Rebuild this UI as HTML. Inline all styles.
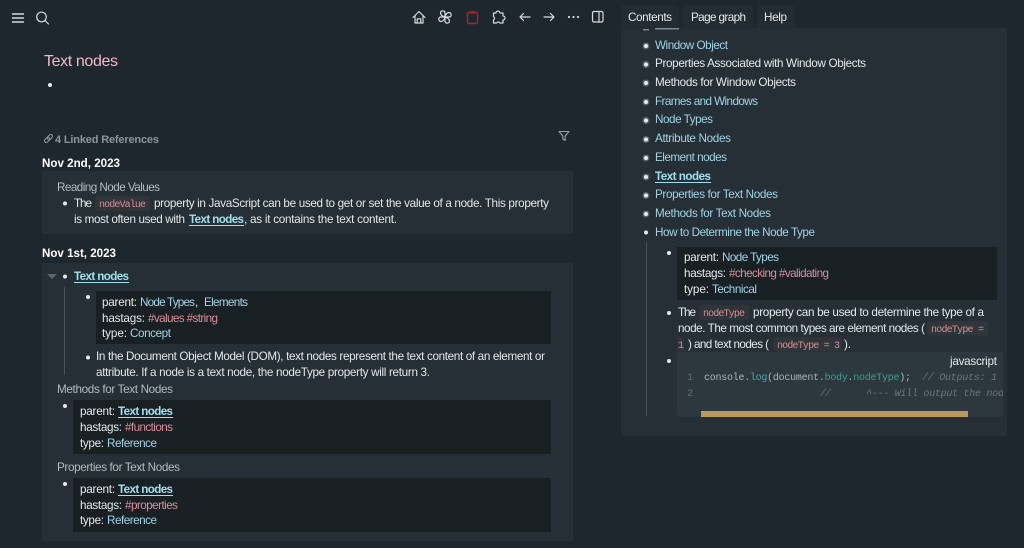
<!DOCTYPE html>
<html><head><meta charset="utf-8"><title>Text nodes</title>
<style>
html,body{margin:0;padding:0;background:#1f272e;width:1024px;height:548px;overflow:hidden}
svg{display:block}
text{font-family:"Liberation Sans",sans-serif;font-size:11.7px;fill:#e4e8ea}
.l{fill:#9dd3e6}
.b{font-weight:bold;fill:#9fe0f0;font-size:11.6px}
.t{fill:#d98c9a}
.g{fill:#b3bbc0}
.h{font-weight:bold;fill:#fff;font-size:11.6px}
.m{font-family:"Liberation Mono",monospace;font-size:10px}
.p{fill:#d98c9a}
.i{fill:none;stroke:#d5dadd;stroke-width:1.2;stroke-linecap:round;stroke-linejoin:round}
</style></head><body>
<svg width="1024" height="548" viewBox="0 0 1024 548" xmlns="http://www.w3.org/2000/svg">
<rect width="1024" height="548" fill="#1f272e"/>

<!-- toolbar icons -->
<path class="i" d="M12.5 14h11M12.5 18h11M12.5 22h11" style="stroke-width:1.4"/>
<circle class="i" cx="41.5" cy="17" r="4.8"/><path class="i" d="M45 20.5l3.5 3.5"/>
<path class="i" d="M413 17.500l6-6 6 6M415 15.500v7.500h8v-7.500M417.200 23v-4.200h3.600v4.200"/>
<path class="i" d="M445 17c-3.500-1-4.500-2.500-4.500-4a2.300 2.300 0 0 1 4.500-.5zM445 17c1-3.500 2.500-4.500 4-4.500a2.300 2.300 0 0 1 .5 4.500zM445 17c3.500 1 4.500 2.500 4.500 4a2.300 2.300 0 0 1-4.500.5zM445 17c-1 3.500-2.500 4.500-4 4.500a2.300 2.300 0 0 1-.5-4.500z"/>
<rect x="467.500" y="12.500" width="10" height="11" rx="1.500" fill="none" stroke="#a82424" stroke-width="1.500"/><rect x="470" y="11" width="5" height="2.500" rx=".8" fill="#a82424"/>
<path class="i" d="M494 14h2.500a2 2 0 0 1 4 0h3v3a2 2 0 0 1 0 4v3h-3a2 2 0 0 0-3.500 0h-3v-3a2 2 0 0 0 0-3.500z" transform="translate(-.5 -1)"/>
<path class="i" d="M520 17h10M520 17l3.500-3.500M520 17l3.500 3.500"/>
<path class="i" d="M544 17h10M554 17l-3.500-3.500M554 17l-3.500 3.500"/>
<circle cx="569" cy="17" r="1.100" fill="#d5dadd"/><circle cx="573.500" cy="17" r="1.100" fill="#d5dadd"/><circle cx="578" cy="17" r="1.100" fill="#d5dadd"/>
<rect class="i" x="592.500" y="11.500" width="10.500" height="10.500" rx="1.500"/><path class="i" d="M599 11.500v10.500"/>

<!-- left heading -->
<text x="44" y="66" style="font-size:16px;fill:#f4b8c6" textLength="74">Text nodes</text>
<circle cx="50" cy="85" r="2" fill="#e6eaec"/>
<g transform="rotate(-45 48.500 138.500)" fill="none" stroke="#8a949c" stroke-width="1.100">
<rect x="43.500" y="136.700" width="6" height="3.600" rx="1.800"/>
<rect x="47.500" y="136.700" width="6" height="3.600" rx="1.800"/>
</g>
<text x="55" y="143" style="font-weight:bold;fill:#8a949c;font-size:11px" textLength="104">4 Linked References</text>
<path d="M559 131.500h10l-3.800 4.500v4.500l-2.400-1.500v-3z" fill="none" stroke="#98a1a8" stroke-width="1.100" stroke-linejoin="round"/>

<!-- card 1 -->
<text x="42" y="167" class="h" textLength="78">Nov 2nd, 2023</text>
<rect x="42" y="171" width="531" height="63" rx="2" fill="#252f35"/>
<text x="57" y="191" class="g" textLength="103">Reading Node Values</text>
<circle cx="65" cy="203.500" r="2" fill="#e6eaec"/>
<text x="74" y="207" textLength="18">The</text>
<rect x="95" y="196" width="55" height="15" rx="3" fill="#2f3539"/>
<text x="99" y="207" class="m p" textLength="47">nodeValue</text>
<text x="154" y="207" textLength="395">property in JavaScript can be used to get or set the value of a node. This property</text>
<text x="74" y="223" textLength="111">is most often used with</text>
<text x="189" y="223" class="b" textLength="55">Text nodes</text>
<rect x="189" y="225" width="55" height="1" fill="#9fe0f0"/>
<text x="244" y="223" textLength="153">, as it contains the text content.</text>

<!-- card 2 -->
<text x="42" y="257" class="h" textLength="74">Nov 1st, 2023</text>
<rect x="42" y="263" width="531" height="278" rx="2" fill="#252f35"/>
<path d="M47 274h10l-5 5z" fill="#5a666d"/>
<circle cx="65" cy="276.500" r="2" fill="#e6eaec"/>
<text x="74" y="280" class="b" textLength="55">Text nodes</text>
<rect x="74" y="282" width="55" height="1" fill="#9fe0f0"/>
<rect x="64" y="287" width="1" height="88" fill="#46525a"/>

<rect x="96" y="291" width="455" height="53" fill="#192024"/>
<circle cx="88" cy="297" r="2" fill="#e6eaec"/>
<text x="102" y="306" textLength="35">parent:</text>
<text x="140" y="306" class="l" textLength="55">Node Types</text>
<text x="195" y="306">,</text>
<text x="204" y="306" class="l" textLength="44">Elements</text>
<text x="102" y="322" textLength="43">hastags:</text>
<text x="148" y="322" class="t" textLength="70">#values #string</text>
<text x="102" y="337" textLength="25">type:</text>
<text x="130" y="337" class="l" textLength="41">Concept</text>

<circle cx="88" cy="357.500" r="2" fill="#e6eaec"/>
<text x="96" y="360" textLength="449">In the Document Object Model (DOM), text nodes represent the text content of an element or</text>
<text x="96" y="376" textLength="334">attribute. If a node is a text node, the nodeType property will return 3.</text>

<text x="57" y="393" class="g" textLength="116">Methods for Text Nodes</text>
<rect x="73" y="400" width="478" height="54" fill="#192024"/>
<circle cx="65" cy="406" r="2" fill="#e6eaec"/>
<text x="80" y="415" textLength="35">parent:</text>
<text x="118" y="415" class="b" textLength="55">Text nodes</text>
<rect x="118" y="417" width="55" height="1" fill="#9fe0f0"/>
<text x="80" y="431" textLength="42">hastags:</text>
<text x="125" y="431" class="t" textLength="48">#functions</text>
<text x="80" y="447" textLength="24">type:</text>
<text x="107" y="447" class="l" textLength="50">Reference</text>

<text x="57" y="471" class="g" textLength="123">Properties for Text Nodes</text>
<rect x="73" y="478" width="478" height="54" fill="#192024"/>
<circle cx="65" cy="484" r="2" fill="#e6eaec"/>
<text x="80" y="493" textLength="35">parent:</text>
<text x="118" y="493" class="b" textLength="55">Text nodes</text>
<rect x="118" y="495" width="55" height="1" fill="#9fe0f0"/>
<text x="80" y="509" textLength="42">hastags:</text>
<text x="125" y="509" class="t" textLength="53">#properties</text>
<text x="80" y="524" textLength="24">type:</text>
<text x="107" y="524" class="l" textLength="50">Reference</text>

<!-- right panel -->
<rect x="621" y="28" width="386" height="408" rx="3" fill="#252f35"/>
<rect x="621" y="5" width="58" height="25" rx="4" fill="#232c33"/>
<rect x="683" y="5" width="70" height="25" rx="4" fill="#232c33"/>
<rect x="757" y="5" width="38" height="25" rx="4" fill="#232c33"/>
<text x="628" y="21" textLength="44">Contents</text>
<text x="691" y="21" textLength="55">Page graph</text>
<text x="764" y="21" textLength="23">Help</text>
<rect x="643" y="29" width="6" height="1.500" fill="#7d878d"/>
<rect x="655" y="28" width="24" height="1.500" fill="#7d878d"/>

<g fill="#5a666d">
<circle cx="646" cy="46" r="3.500"/><circle cx="646" cy="64.500" r="3.500"/><circle cx="646" cy="83" r="3.500"/><circle cx="646" cy="102" r="3.500"/><circle cx="646" cy="120.500" r="3.500"/><circle cx="646" cy="139.500" r="3.500"/><circle cx="646" cy="158" r="3.500"/><circle cx="646" cy="177" r="3.500"/><circle cx="646" cy="195.500" r="3.500"/><circle cx="646" cy="214" r="3.500"/>
</g>
<g fill="#e6eaec">
<circle cx="646" cy="46" r="2"/><circle cx="646" cy="64.500" r="2"/><circle cx="646" cy="83" r="2"/><circle cx="646" cy="102" r="2"/><circle cx="646" cy="120.500" r="2"/><circle cx="646" cy="139.500" r="2"/><circle cx="646" cy="158" r="2"/><circle cx="646" cy="177" r="2"/><circle cx="646" cy="195.500" r="2"/><circle cx="646" cy="214" r="2"/><circle cx="646" cy="232.500" r="2"/>
</g>
<text x="655" y="49" class="l" textLength="73">Window Object</text>
<text x="655" y="67" textLength="211">Properties Associated with Window Objects</text>
<text x="655" y="86" textLength="141">Methods for Window Objects</text>
<text x="655" y="105" class="l" textLength="103">Frames and Windows</text>
<text x="655" y="123" class="l" textLength="58">Node Types</text>
<text x="655" y="142" class="l" textLength="76">Attribute Nodes</text>
<text x="655" y="161" class="l" textLength="72">Element nodes</text>
<text x="655" y="180" class="b" textLength="56">Text nodes</text>
<rect x="655" y="182" width="56" height="1" fill="#9fe0f0"/>
<text x="655" y="198" class="l" textLength="123">Properties for Text Nodes</text>
<text x="655" y="217" class="l" textLength="116">Methods for Text Nodes</text>
<text x="655" y="236" class="l" textLength="160">How to Determine the Node Type</text>
<rect x="646" y="242" width="1" height="174" fill="#46525a"/>

<rect x="677" y="247" width="320" height="53" fill="#192024"/>
<circle cx="669" cy="253" r="2" fill="#e6eaec"/>
<text x="684" y="261" textLength="35">parent:</text>
<text x="722" y="261" class="l" textLength="57">Node Types</text>
<text x="684" y="277" textLength="42">hastags:</text>
<text x="729" y="277" class="t" textLength="100">#checking #validating</text>
<text x="684" y="293" textLength="25">type:</text>
<text x="712" y="293" class="l" textLength="45">Technical</text>

<circle cx="669" cy="313" r="2" fill="#e6eaec"/>
<text x="678" y="316" textLength="18">The</text>
<rect x="699" y="305" width="50" height="15" rx="3" fill="#2f3539"/>
<text x="703" y="316" class="m p" textLength="42">nodeType</text>
<text x="753" y="316" textLength="231">property can be used to determine the type of a</text>
<text x="678" y="332" textLength="247">node. The most common types are element nodes (</text>
<rect x="927" y="321" width="61" height="14.500" rx="3" fill="#2f3539"/>
<text x="931" y="332" class="m p" textLength="53">nodeType =</text>
<rect x="677" y="337" width="7" height="14.500" rx="2" fill="#2f3539"/>
<text x="678" y="348" class="m p">1</text>
<text x="688" y="348" textLength="81">) and text nodes (</text>
<rect x="773" y="337" width="69" height="14.500" rx="3" fill="#2f3539"/>
<text x="777" y="348" class="m p" textLength="63">nodeType = 3</text>
<text x="844" y="348" textLength="7">).</text>

<rect x="677" y="352" width="326" height="65" rx="3" fill="#2d383e"/>
<circle cx="669" cy="361" r="2" fill="#e6eaec"/>
<text x="950" y="365" textLength="47">javascript</text>
<text x="687" y="380" class="m" style="fill:#5d6a70">1</text>
<text x="687" y="396" class="m" style="fill:#5d6a70">2</text>
<text x="704" y="380" class="m" style="fill:#a9b4b9" textLength="207">console.<tspan style="fill:#4fa3ac">log</tspan>(document.<tspan style="fill:#3a9d96">body</tspan>.<tspan style="fill:#3a9d96">nodeType</tspan>);</text>
<text x="922" y="380" class="m" style="fill:#6a767c;font-style:italic" textLength="75">// Outputs: 1</text>
<text x="820" y="396" class="m" style="fill:#6a767c;font-style:italic" textLength="11">//</text>
<text x="866" y="396" class="m" style="fill:#6a767c;font-style:italic" textLength="138">^--- Will output the nod</text>
<rect x="1003" y="352" width="4" height="65" fill="#252f35"/>
<rect x="701" y="411" width="267" height="6" fill="#b79a5c"/>
</svg>
</body></html>
